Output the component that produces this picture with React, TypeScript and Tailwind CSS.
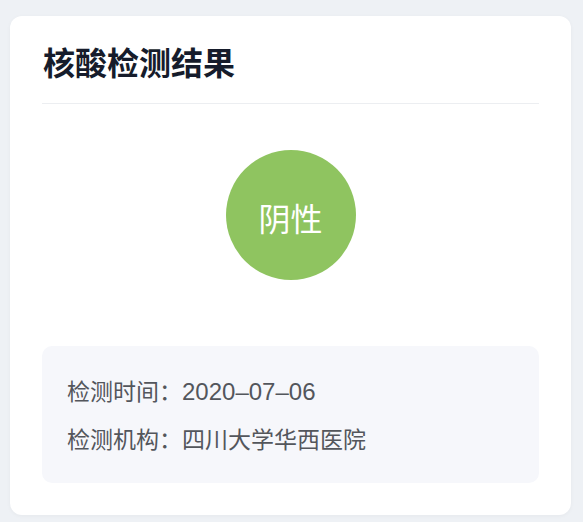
export default function App() {
  return (
    <div
      className="w-[583px] h-[522px] bg-[#eef1f5] pt-[16px] pl-[10px] overflow-hidden"
      style={{ fontFamily: '"Noto Sans CJK SC", "Noto Sans", sans-serif' }}
    >
      <div className="w-[561px] h-[499px] bg-white rounded-[12px] shadow-[0_1px_4px_rgba(0,0,0,0.04)] px-[32px] pt-[25px]">
        {/* Header */}
        <div className="border-b border-[#eceef1] pb-[22px]">
          <h1 className="text-[32px] leading-[40px] font-bold text-[#161c2b] pl-px">
            核酸检测结果
          </h1>
        </div>

        {/* Result badge */}
        <div className="flex justify-center pt-[46px]">
          <div className="w-[130px] h-[130px] rounded-full bg-[#8fc460] flex items-center justify-center">
            <span className="text-[32px] leading-none text-white pt-[3px]">阴性</span>
          </div>
        </div>

        {/* Info */}
        <div className="mt-[66px] bg-[#f6f7fb] rounded-[10px] px-[25px] py-[21px] text-[23px] leading-[47px] text-[#53565c]">
          <div>
            检测时间：<span style={{ fontFamily: '"Liberation Sans", "Noto Sans CJK SC", sans-serif' }} className="text-[24px]">2020–07–06</span>
          </div>
          <div>检测机构：四川大学华西医院</div>
        </div>
      </div>
    </div>
  );
}
